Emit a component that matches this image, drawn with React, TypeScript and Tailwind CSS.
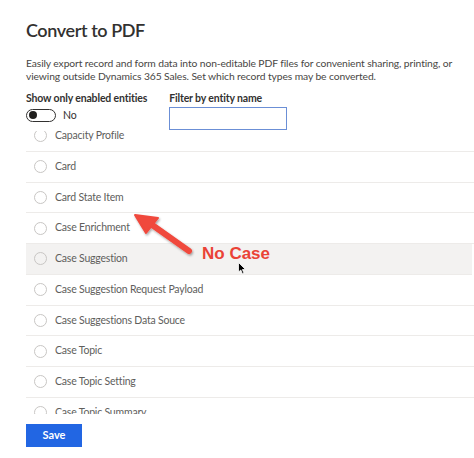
const rows = [
  "Capacity Profile",
  "Card",
  "Card State Item",
  "Case Enrichment",
  "Case Suggestion",
  "Case Suggestion Request Payload",
  "Case Suggestions Data Souce",
  "Case Topic",
  "Case Topic Setting",
  "Case Topic Summary",
];

const App = () => {
  return (
    <div className="relative w-[474px] h-[458px] bg-white overflow-hidden text-[#323130]" style={{ fontFamily: 'Lato, "Open Sans", sans-serif' }}>
      <div className="pl-[26px] pt-[16px]">
        <h1 className="text-[18px] leading-[28px] font-semibold tracking-[-0.4px]">Convert to PDF</h1>
        <p className="mt-[13px] text-[10.3px] leading-[12.5px] text-[#484644] tracking-[-0.1px] pr-[12px]">
          Easily export record and form data into non-editable PDF files for convenient sharing, printing, or viewing outside Dynamics 365 Sales. Set which record types may be converted.
        </p>

        {/* Filters */}
        <div className="mt-[9px] flex gap-[22px]">
          <div className="flex flex-col">
            <span className="text-[10.5px] leading-[14px] font-bold tracking-[-0.15px]">Show only enabled entities</span>
            <div className="mt-[3px] flex items-center gap-[7px]">
              <div className="w-[30px] h-[13px] rounded-full border border-[#323130] flex items-center px-[2px]">
                <div className="w-[8px] h-[8px] rounded-full bg-[#201f1e]" />
              </div>
              <span className="text-[10.5px] leading-[14px]">No</span>
            </div>
          </div>
          <div className="flex flex-col">
            <span className="text-[10.5px] leading-[14px] font-bold tracking-[-0.15px]">Filter by entity name</span>
            <div className="mt-[2px] w-[118px] h-[23px] border border-[#6b8fd6] bg-white" />
          </div>
        </div>

        {/* Entity list */}
        <div className="mt-[1px] h-[283px] overflow-hidden">
          <div className="-mt-[10px]">
            {rows.map((r) => (
              <div
                key={r}
                className={`h-[30.75px] flex items-center border-b border-[#edebe9] ${r === "Case Suggestion" ? "bg-[#f3f2f1] mr-[2px]" : ""}`}
              >
                <div className="ml-[8px] w-[13px] h-[13px] rounded-full border border-[#c8c6c4]" />
                <span className="ml-[8px] text-[10.5px] tracking-[-0.2px] text-[#605e5c]">{r}</span>
              </div>
            ))}
          </div>
        </div>

        <button className="mt-[10px] w-[56px] h-[23px] bg-[#2266e3] text-white text-[11px] font-bold">Save</button>
      </div>

      {/* Annotation */}
      <svg className="absolute left-0 top-0" width="474" height="458" viewBox="0 0 474 458">
        <defs>
          <filter id="sh" x="-20%" y="-20%" width="140%" height="140%">
            <feDropShadow dx="1" dy="1.5" stdDeviation="1.2" floodColor="#000" floodOpacity="0.35" />
          </filter>
        </defs>
        <g filter="url(#sh)" fill="#f0483c" stroke="#f0483c" strokeLinejoin="round" strokeLinecap="round">
          <line x1="189" y1="251" x2="148" y2="222" strokeWidth="6" />
          <polygon points="135,215 158,218 146,233" strokeWidth="2" />
        </g>
      </svg>
      <div className="absolute left-[202px] top-[244px] text-[17px] leading-[20px] font-bold text-[#ea4336]" style={{ fontFamily: '"Liberation Sans", Arial, sans-serif' }}>
        No Case
      </div>
      <svg className="absolute left-[238px] top-[262px]" width="9" height="13" viewBox="0 0 9 13">
        <path d="M0.5 0.5 L0.5 10 L2.8 8 L4.5 12 L6 11.3 L4.4 7.5 L7.5 7.5 Z" fill="#000" stroke="#fff" strokeWidth="0.8" />
      </svg>
    </div>
  );
};

export default App;
